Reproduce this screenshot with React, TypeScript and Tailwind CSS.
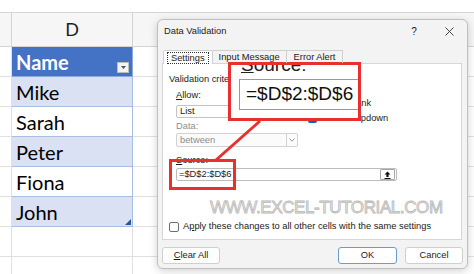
import React from "react"

const names = [
  { name: "Mike", band: true },
  { name: "Sarah", band: false },
  { name: "Peter", band: true },
  { name: "Fiona", band: false },
  { name: "John", band: true },
]

function Check({ checked }: { checked?: boolean }) {
  if (checked) {
    return (
      <span className="w-[9px] h-[9px] rounded-[2px] bg-[#0067c0] flex items-center justify-center shrink-0">
        <svg width="7" height="7" viewBox="0 0 10 10">
          <path d="M1.5 5.2 L4 7.6 L8.6 2.6" fill="none" stroke="white" strokeWidth="1.6" />
        </svg>
      </span>
    )
  }
  return <span className="w-[10px] h-[10px] rounded-[2px] border border-[#6f6f6f] bg-white shrink-0" />
}

function Sheet() {
  return (
    <div className="flex flex-col font-['Lato',sans-serif]">
      <div className="h-[12px] bg-white" />
      {/* column header */}
      <div className="flex h-[35px] bg-[#f6f6f6] border-y border-[#d4d4d4]">
        <div className="w-[12px] border-r border-[#d4d4d4]" />
        <div className="w-[121px] border-r border-[#d4d4d4] flex items-center justify-center text-[18px] text-[#1e1e1e]">
          D
        </div>
        <div className="flex-1" />
      </div>
      {/* table header */}
      <div className="flex h-[30px]">
        <div className="w-[12px] border-r border-b border-[#e0e0e0]" />
        <div className="w-[121px] bg-[#4472c4] border-r border-b border-[#8ea9db] flex items-center pl-[4px] pr-[3px]">
          <span className="text-[20px] font-bold text-white">Name</span>
          <span className="ml-auto self-end mb-[3px] w-[12px] h-[11px] bg-[#f3f3f3] border border-[#bdbdbd] flex items-center justify-center">
            <svg width="5" height="3" viewBox="0 0 5 3">
              <path d="M0 0 H5 L2.5 3 Z" fill="#555" />
            </svg>
          </span>
        </div>
        <div className="flex-1 border-b border-[#e0e0e0]" />
      </div>
      {names.map((n, i) => (
        <div key={n.name} className="flex h-[30px]">
          <div className="w-[12px] border-r border-b border-[#e0e0e0]" />
          <div
            className={`relative w-[121px] border-r border-b border-[#a9bde3] flex items-center pl-[4px] text-[20px] text-black ${
              n.band ? "bg-[#d9e1f2]" : "bg-white"
            }`}
          >
            {n.name}
            {i === names.length - 1 && (
              <svg className="absolute right-[1px] bottom-[1px]" width="6" height="6" viewBox="0 0 6 6">
                <path d="M6 0 V6 H0 Z" fill="#2f5597" />
              </svg>
            )}
          </div>
          <div className="flex-1 border-b border-[#e0e0e0]" />
        </div>
      ))}
      {[0, 1].map((k) => (
        <div key={k} className="flex h-[30px]">
          <div className="w-[12px] border-r border-b border-[#e0e0e0]" />
          <div className="w-[121px] border-r border-b border-[#e0e0e0]" />
          <div className="flex-1 border-b border-[#e0e0e0]" />
        </div>
      ))}
    </div>
  )
}

function Dialog() {
  return (
    <div className="absolute left-[157px] top-[19px] w-[311px] h-[250px] rounded-[6px] bg-[#f3f3f3] border border-[#bfbfbf] shadow-[0_2px_8px_rgba(0,0,0,0.18)] flex flex-col font-['Liberation_Sans',Arial,sans-serif] text-[9.3px] leading-[11px] text-[#1b1b1b]">
      {/* title bar */}
      <div className="h-[22px] flex items-center pl-[6px] pr-[13px]">
        <span>Data Validation</span>
        <span className="ml-auto w-[10px] text-center text-[10px]">?</span>
        <svg className="ml-[26px]" width="9" height="9" viewBox="0 0 9 9">
          <path d="M0.5 0.5 L8.5 8.5 M8.5 0.5 L0.5 8.5" stroke="#333" strokeWidth="0.9" />
        </svg>
      </div>

      {/* tabs */}
      <div className="mt-[8px] ml-[5px] flex h-[14px] relative z-10">
        <div className="h-[14px] px-[3px] pt-[1px] bg-white border-x border-t border-[#cfcfcf] rounded-t-[2px]">
          <span className="block px-[3px] border border-dotted border-[#333] leading-[10px]">Settings</span>
        </div>
        <div className="h-[13px] px-[6px] pt-[1px] border-t border-r border-[#cfcfcf]">Input Message</div>
        <div className="h-[13px] px-[7px] pt-[1px] border-t border-r border-[#cfcfcf]">Error Alert</div>
      </div>

      {/* panel */}
      <div className="-mt-px ml-[4px] w-[300px] h-[177px] bg-white border border-[#d6d6d6] flex flex-col">
        <div className="pt-[10px] pl-[6px]">Validation criteria</div>
        <div className="flex pl-[13px]">
          <div className="w-[122px] flex flex-col">
            <div className="mt-[5px]">
              <span className="underline">A</span>llow:
            </div>
            <div className="mt-[4px] h-[13px] border border-[#c4c4c4] rounded-[2px] flex items-center pl-[3px]">List</div>
            <div className="mt-[3px] text-[#8c8c8c]">Data:</div>
            <div className="mt-[1px] h-[14px] border border-[#d2d2d2] rounded-[2px] bg-[#fbfbfb] flex items-center text-[#8c8c8c]">
              <span className="pl-[3px]">between</span>
              <span className="ml-auto w-[11px] h-full border-l border-[#d2d2d2] flex items-center justify-center">
                <svg width="6" height="4" viewBox="0 0 6 4">
                  <path d="M0.5 0.5 L3 3.2 L5.5 0.5" fill="none" stroke="#8c8c8c" strokeWidth="0.9" />
                </svg>
              </span>
            </div>
          </div>
          <div className="ml-[10px] pt-[12px] flex flex-col gap-[3px]">
            <div className="h-[12px] flex items-center gap-[3px]">
              <Check checked />
              <span>Ignore blank</span>
            </div>
            <div className="h-[12px] flex items-center gap-[3px]">
              <Check checked />
              <span>In-cell dropdown</span>
            </div>
          </div>
        </div>
        <div className="mt-[8px] pl-[13px]">
          <span className="underline">S</span>ource:
        </div>
        <div className="mt-[2px] ml-[13px] w-[221px] h-[13px] border border-[#bcbcbc] rounded-[2px] flex items-center pl-[2px] pr-px">
          <span>=$D$2:$D$6</span>
          <span className="ml-auto w-[15px] h-[11px] border border-[#a6a6a6] rounded-[1px] flex items-center justify-center">
            <svg width="7" height="8" viewBox="0 0 7 8">
              <path d="M3.5 0.5 L6.5 3.6 H4.6 V6 H2.4 V3.6 H0.5 Z" fill="#111" />
              <rect x="0.5" y="7" width="6" height="1" fill="#111" />
            </svg>
          </span>
        </div>
        <div className="mt-[40px] pl-[6px] flex items-center gap-[4px]">
          <Check />
          <span>
            A<span className="underline">p</span>ply these changes to all other cells with the same settings
          </span>
        </div>
      </div>

      {/* buttons */}
      <div className="mt-[7px] ml-[4px] mr-[4px] flex items-center">
        <button className="w-[58px] h-[17px] bg-white border border-[#cfcfcf] rounded-[3px]">
          <span className="underline">C</span>lear All
        </button>
        <button className="ml-auto w-[59px] h-[17px] bg-white border border-[#6e9ad3] rounded-[3px]">OK</button>
        <button className="ml-[8px] w-[58px] h-[17px] bg-white border border-[#cfcfcf] rounded-[3px]">Cancel</button>
      </div>
    </div>
  )
}

export default function App() {
  return (
    <div className="relative w-[474px] h-[274px] overflow-hidden bg-white">
      <Sheet />
      <Dialog />

      {/* watermark */}
      <div className="absolute left-[210px] top-[195px] text-[17px] tracking-[-0.4px] font-['Liberation_Sans',Arial,sans-serif] text-[#ececec] [-webkit-text-stroke:0.8px_#b8b8b8] pointer-events-none">
        WWW.EXCEL-TUTORIAL.COM
      </div>

      {/* zoomed callout */}
      <div className="absolute left-[228px] top-[62px] w-[133px] h-[59px] border-[3px] border-[#e8312f] bg-white overflow-hidden font-['Liberation_Sans',Arial,sans-serif]">
        <div className="-mt-[10px] pl-[10px] text-[19px] leading-[19px] text-[#222] whitespace-nowrap">
          <span className="underline">S</span>ource:
        </div>
        <div className="mt-[5px] ml-[8px] w-[200px] h-[31px] border-[1.5px] border-[#9a9a9a] flex items-center pl-[6px] text-[19px] text-[#111]">
          =$D$2:$D$6
        </div>
      </div>

      <svg className="absolute left-0 top-0 pointer-events-none" width="474" height="274">
        <line x1="216" y1="160" x2="260" y2="121" stroke="#e8312f" strokeWidth="3" />
      </svg>

      <div className="absolute left-[169px] top-[159px] w-[67px] h-[31px] border-[3px] border-[#e8312f]" />
    </div>
  )
}
